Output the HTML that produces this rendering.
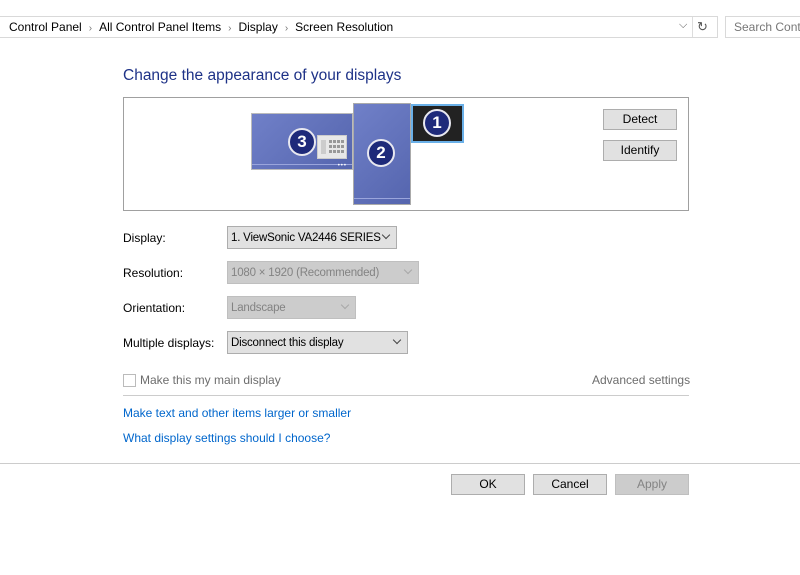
<!DOCTYPE html>
<html><head><meta charset="utf-8"><style>
*{box-sizing:border-box;margin:0;padding:0}
body{width:800px;height:575px;background:#fff;font-family:"Liberation Sans",sans-serif;font-size:12px;color:#000;position:relative;overflow:hidden}
.a{position:absolute;white-space:nowrap}
.addr{left:0;top:16px;width:718px;height:22px;border:1px solid #d9d9d9;border-left:none}
.bc{left:9px;top:20px;font-size:12px}
.bc span.s{color:#777;margin:0 7px;font-size:10px}
.search{left:725px;top:16px;width:80px;height:22px;border:1px solid #d9d9d9;color:#777;padding:3px 0 0 8px;overflow:hidden}
.title{left:123px;top:67px;font-size:15.5px;color:#1e3287}
.box{left:123px;top:97px;width:566px;height:114px;border:1px solid #a0a0a0}
.btn{background:#e1e1e1;border:1px solid #adadad;text-align:center;height:21px;line-height:19px}
.lbl{left:123px}
.dd{border:1px solid #adadad;background:#e1e1e1;height:23px;line-height:23px;padding-left:3px;font-size:11.5px;letter-spacing:-0.2px}
.dd.dis{background:#ccc;border-color:#bfbfbf;color:#838383}
.chev{position:absolute;right:7px;top:7px;width:6px;height:6px;border-right:1px solid #444;border-bottom:1px solid #444;transform:rotate(45deg);margin-top:-2px}
.dis .chev{border-color:#a8a8a8}
.link{left:123px;color:#0066cc}
.mon{border:1px solid #bbb;background:linear-gradient(135deg,#7080c8,#5565ae)}
.num{position:absolute;width:28px;height:28px;border-radius:50%;background:#1e2a7a;border:2px solid #e8e8f0;color:#fff;font-weight:bold;font-size:17px;text-align:center;line-height:24px}
.kp{position:absolute;left:65px;top:21px;width:30px;height:24px;background:#e8e8e8;border:1px solid #ccc}
.kp i{position:absolute;width:3px;height:3px;background:#999}
</style></head><body>
<div class="a addr"></div>
<div class="a bc">Control Panel<span class="s">›</span>All Control Panel Items<span class="s">›</span>Display<span class="s">›</span>Screen Resolution</div>
<div class="a" style="left:679px;top:19px;color:#555;font-size:11px">⌵</div>
<div class="a" style="left:692px;top:17px;width:1px;height:20px;background:#ddd"></div>
<div class="a" style="left:697px;top:19px;color:#555;font-size:13px">↻</div>
<div class="a search">Search Contr</div>
<div class="a title">Change the appearance of your displays</div>
<div class="a box"></div>
<div class="a mon" style="left:251px;top:113px;width:102px;height:57px"><div style="position:absolute;left:0;right:0;bottom:4px;height:1px;background:#9aa5dc"></div><div style="position:absolute;right:5px;bottom:0;color:#fff;font-size:6px;letter-spacing:1px">•••</div>
<div class="num" style="left:36px;top:14px">3</div>
<div class="kp">
<i style="left:3px;top:4px;width:5px;height:14px;background:#ccc"></i>
<i style="left:11px;top:4px"></i><i style="left:15px;top:4px"></i><i style="left:19px;top:4px"></i><i style="left:23px;top:4px"></i>
<i style="left:11px;top:9px"></i><i style="left:15px;top:9px"></i><i style="left:19px;top:9px"></i><i style="left:23px;top:9px"></i>
<i style="left:11px;top:14px"></i><i style="left:15px;top:14px"></i><i style="left:19px;top:14px"></i><i style="left:23px;top:14px"></i>
</div></div>
<div class="a mon" style="left:353px;top:103px;width:58px;height:102px;border-color:#aaa"><div style="position:absolute;left:0;right:0;bottom:5px;height:1px;background:#9aa5dc"></div><div class="num" style="left:13px;top:35px">2</div></div>
<div class="a" style="left:411px;top:104px;width:53px;height:39px;background:#222;border:2px solid #6ab0e8"><div class="num" style="left:10px;top:3px">1</div></div>
<div class="a btn" style="left:603px;top:109px;width:74px">Detect</div>
<div class="a btn" style="left:603px;top:140px;width:74px">Identify</div>
<div class="a lbl" style="top:231px">Display:</div>
<div class="a lbl" style="top:266px">Resolution:</div>
<div class="a lbl" style="top:301px">Orientation:</div>
<div class="a lbl" style="top:336px">Multiple displays:</div>
<div class="a dd" style="left:227px;top:226px;width:170px">1. ViewSonic VA2446 SERIES<div class="chev"></div></div>
<div class="a dd dis" style="left:227px;top:261px;width:192px">1080 × 1920 (Recommended)<div class="chev"></div></div>
<div class="a dd dis" style="left:227px;top:296px;width:129px">Landscape<div class="chev"></div></div>
<div class="a dd" style="left:227px;top:331px;width:181px">Disconnect this display<div class="chev"></div></div>
<div class="a" style="left:123px;top:374px;width:13px;height:13px;border:1px solid #bbb"></div>
<div class="a" style="left:140px;top:373px;color:#6d6d6d">Make this my main display</div>
<div class="a" style="left:592px;top:373px;color:#6d6d6d">Advanced settings</div>
<div class="a" style="left:123px;top:395px;width:566px;height:1px;background:#ccc"></div>
<div class="a link" style="top:406px">Make text and other items larger or smaller</div>
<div class="a link" style="top:431px">What display settings should I choose?</div>
<div class="a" style="left:0;top:463px;width:800px;height:1px;background:#ccc"></div>
<div class="a btn" style="left:451px;top:474px;width:74px">OK</div>
<div class="a btn" style="left:533px;top:474px;width:74px">Cancel</div>
<div class="a btn" style="left:615px;top:474px;width:74px;background:#ccc;border-color:#bfbfbf;color:#838383">Apply</div>
</body></html>
